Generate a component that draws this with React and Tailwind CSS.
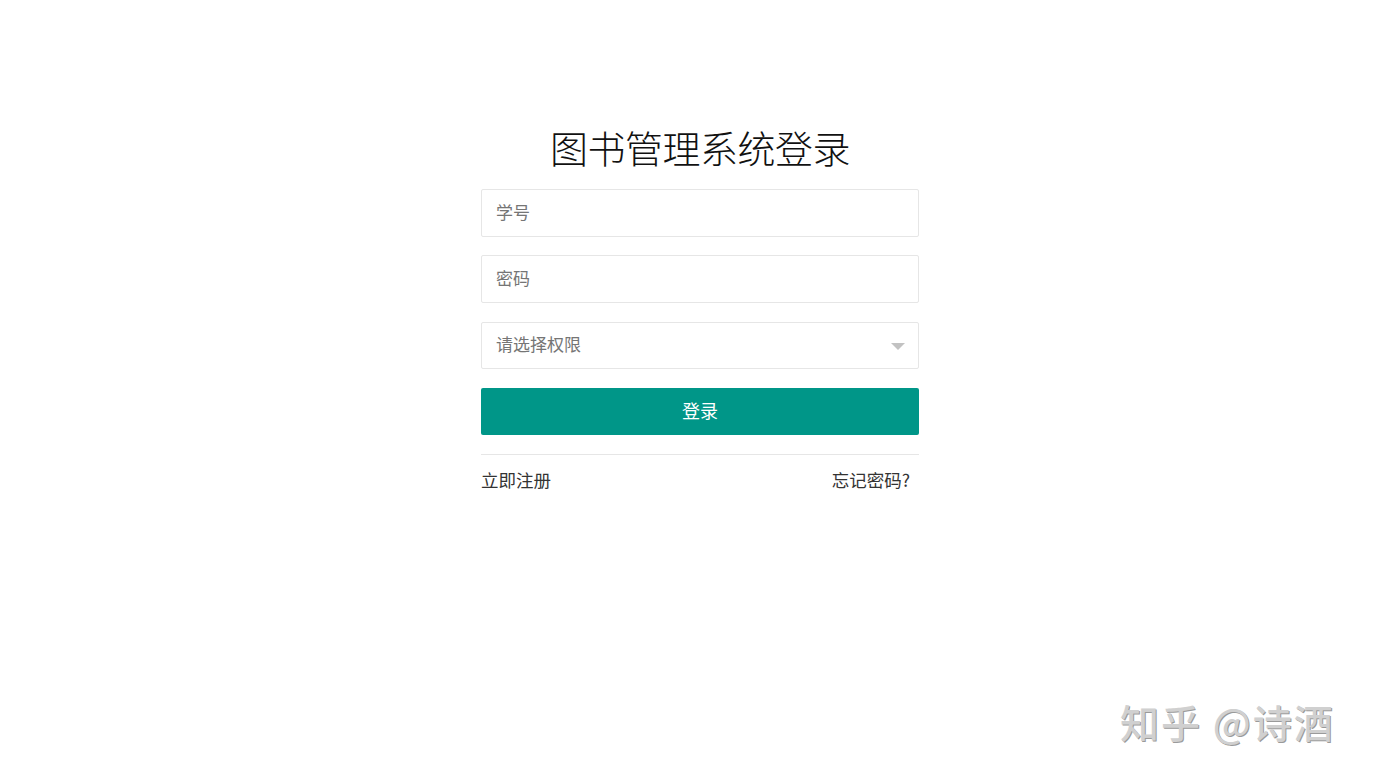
import { useState } from "react";

const font = { fontFamily: '"Noto Sans CJK SC", "Noto Sans", sans-serif' };

export default function App() {
  const [role, setRole] = useState("");

  return (
    <div className="relative min-h-[779px] w-full bg-white overflow-hidden" style={font}>
      <div className="pt-[120px] pl-[481px]">
        <div className="w-[438px]">
          <h1 className="text-center text-[38px] leading-[54px] font-light text-[#111] tracking-[-0.5px] mb-[15px]">
            图书管理系统登录
          </h1>

          {/* inputs */}
          <div className="flex flex-col gap-[18px]">
            <input
              type="text"
              placeholder="学号"
              className="h-[48px] w-full border border-[#e6e6e6] rounded-[2px] px-[14px] pb-[4px] text-[17px] text-[#333] placeholder:text-[#757575] outline-none"
            />
            <input
              type="password"
              placeholder="密码"
              className="h-[48px] w-full border border-[#e6e6e6] rounded-[2px] px-[14px] pb-[4px] text-[17px] text-[#333] placeholder:text-[#757575] outline-none"
            />
            <div className="relative mt-px">
              <div className="h-[47px] w-full border border-[#e6e6e6] rounded-[2px] px-[14px] pb-[4px] flex items-center text-[17px] text-[#757575]">
                {role || "请选择权限"}
              </div>
              <span className="absolute right-[14px] top-[21px] w-0 h-0 border-l-[7px] border-r-[7px] border-t-[7px] border-l-transparent border-r-transparent border-t-[#c2c2c2]" />
            </div>
            <button
              onClick={() => setRole(role)}
              className="mt-px h-[47px] w-full rounded-[2px] bg-[#009688] pb-[3px] text-white text-[18px]"
            >
              登录
            </button>
          </div>

          <hr className="mt-[19px] border-0 border-t border-[#e6e6e6]" />

          <div className="flex justify-between items-center mt-[12px] pr-[9px] text-[17.5px] text-[#333] leading-[26px]">
            <a href="#">立即注册</a>
            <a href="#">忘记密码?</a>
          </div>
        </div>
      </div>

      {/* watermark */}
      <div
        className="absolute left-[1120px] top-[694px] text-[39px] leading-[54px] font-medium text-[#d0d0d0] tracking-[2px] whitespace-nowrap"
        style={{ textShadow: "1px 1px 0 #9a9a9a, -1px -1px 0 #ffffff" }}
      >
        知乎 @诗酒
      </div>
    </div>
  );
}
